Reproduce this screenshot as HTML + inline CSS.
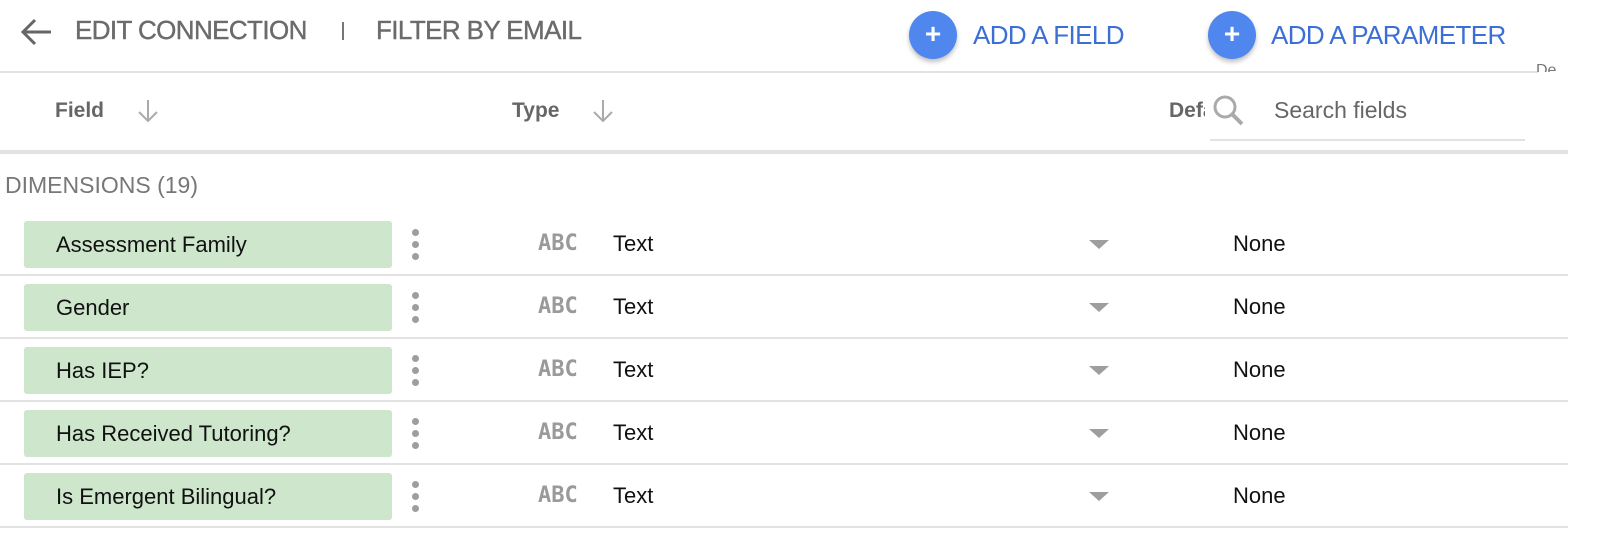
<!DOCTYPE html>
<html><head><style>
*{margin:0;padding:0;box-sizing:border-box}
body{width:1598px;height:540px;background:#fff;font-family:"Liberation Sans",Arial,sans-serif;position:relative;overflow:hidden}
.a{position:absolute;white-space:nowrap}
.hdr{color:#6b6b6b;font-size:26px;letter-spacing:-0.6px;top:15px;-webkit-text-stroke:0.4px #6b6b6b}
.blue{color:#3c6fd6;font-size:26px;letter-spacing:-0.6px;top:20px}
.circ{position:absolute;width:48px;height:48px;border-radius:50%;background:#4f87ee;top:11px;box-shadow:0 3px 5px rgba(0,0,0,.25);color:#fff;font-size:28px;text-align:center;line-height:46px;font-weight:bold}
.col{color:#666;font-size:21px;font-weight:bold;top:99px}
.chip{position:absolute;left:24px;width:368px;height:47px;background:#cde6cc;border-radius:3px;font-size:22px;color:#111;padding-left:32px;line-height:47px}
.dots{position:absolute;left:412px;width:8px}
.dots i{display:block;width:7px;height:7px;border-radius:50%;background:#9e9e9e;margin-bottom:5px}
.abc{position:absolute;left:538px;font-size:22px;font-weight:bold;color:#9a9a9a;transform:scaleX(1.0);transform-origin:left;font-family:"DejaVu Sans Mono",monospace}
.txt{position:absolute;left:613px;font-size:22px;color:#111}
.tri{position:absolute;left:1089px;width:0;height:0;border-left:10px solid transparent;border-right:10px solid transparent;border-top:9px solid #9e9e9e}
.none{position:absolute;left:1233px;font-size:22px;color:#111}
.sep{position:absolute;left:0;width:1568px;height:2px;background:#e2e2e2}
</style></head><body>
<svg class="a" style="left:18px;top:16px" width="36" height="32" viewBox="0 0 36 32"><path d="M33 16H5M17 4L5 16l12 12" stroke="#666" stroke-width="3" fill="none"/></svg>
<div class="a hdr" style="left:75px">EDIT CONNECTION</div>
<div class="a" style="left:342px;top:22px;width:2px;height:18px;background:#777"></div>
<div class="a hdr" style="left:376px">FILTER BY EMAIL</div>
<div class="circ" style="left:909px">+</div>
<div class="a blue" style="left:973px">ADD A FIELD</div>
<div class="circ" style="left:1208px">+</div>
<div class="a blue" style="left:1271px">ADD A PARAMETER</div>
<div class="a" style="left:0;top:71px;width:1538px;height:2px;background:#e2e2e2"></div>
<div class="a" style="left:1536px;top:62px;font-size:16px;color:#777;height:10px;overflow:hidden">De</div>
<div class="a col" style="left:55px">Field</div>
<svg class="a" style="left:136px;top:98px" width="24" height="26"><path d="M12 2v21M3 14l9 9 9-9" stroke="#aaa" stroke-width="2" fill="none"/></svg>
<div class="a col" style="left:512px">Type</div>
<svg class="a" style="left:591px;top:98px" width="24" height="26"><path d="M12 2v21M3 14l9 9 9-9" stroke="#aaa" stroke-width="2" fill="none"/></svg>
<div class="a col" style="left:1169px;width:36px;overflow:hidden">Default</div>
<svg class="a" style="left:1211px;top:93px" width="40" height="40"><circle cx="14" cy="14" r="10" stroke="#aaa" stroke-width="3" fill="none"/><path d="M21 21l10 10" stroke="#aaa" stroke-width="4"/></svg>
<div class="a" style="left:1274px;top:97px;font-size:23px;color:#666">Search fields</div>
<div class="a" style="left:1210px;top:139px;width:315px;height:2px;background:#e2e2e2"></div>
<div class="a" style="left:0;top:150px;width:1568px;height:4px;background:#e2e2e2"></div>
<div class="a" style="left:5px;top:172px;font-size:23px;color:#777">DIMENSIONS (19)</div>

<div class="chip" style="top:221px">Assessment Family</div>
<div class="dots" style="top:229px"><i></i><i></i><i></i></div>
<div class="abc" style="top:231px">ABC</div><div class="txt" style="top:231px">Text</div>
<div class="tri" style="top:240px"></div><div class="none" style="top:231px">None</div>
<div class="sep" style="top:274px"></div>

<div class="chip" style="top:284px">Gender</div>
<div class="dots" style="top:292px"><i></i><i></i><i></i></div>
<div class="abc" style="top:294px">ABC</div><div class="txt" style="top:294px">Text</div>
<div class="tri" style="top:303px"></div><div class="none" style="top:294px">None</div>
<div class="sep" style="top:337px"></div>

<div class="chip" style="top:347px">Has IEP?</div>
<div class="dots" style="top:355px"><i></i><i></i><i></i></div>
<div class="abc" style="top:357px">ABC</div><div class="txt" style="top:357px">Text</div>
<div class="tri" style="top:366px"></div><div class="none" style="top:357px">None</div>
<div class="sep" style="top:400px"></div>

<div class="chip" style="top:410px">Has Received Tutoring?</div>
<div class="dots" style="top:418px"><i></i><i></i><i></i></div>
<div class="abc" style="top:420px">ABC</div><div class="txt" style="top:420px">Text</div>
<div class="tri" style="top:429px"></div><div class="none" style="top:420px">None</div>
<div class="sep" style="top:463px"></div>

<div class="chip" style="top:473px">Is Emergent Bilingual?</div>
<div class="dots" style="top:481px"><i></i><i></i><i></i></div>
<div class="abc" style="top:483px">ABC</div><div class="txt" style="top:483px">Text</div>
<div class="tri" style="top:492px"></div><div class="none" style="top:483px">None</div>
<div class="sep" style="top:526px"></div>
</body></html>
